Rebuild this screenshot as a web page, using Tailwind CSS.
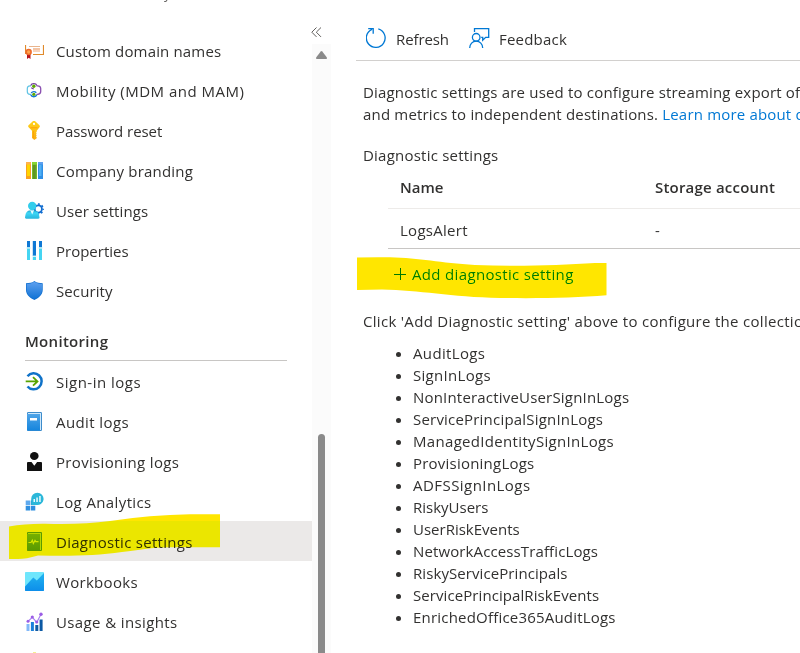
<!DOCTYPE html>
<html lang="en">
  <head>
    <meta charset="UTF-8" />
    <meta name="viewport" content="width=device-width, initial-scale=1.0" />
    <title>Diagnostic settings</title>
    <script src="https://cdn.jsdelivr.net/npm/@tailwindcss/browser@4"></script>
  </head>
  <body class="bg-white">
    <div class="relative flex w-[800px] h-[653px] overflow-hidden bg-white font-['Open_Sans','Noto_Sans',sans-serif] text-[15px] leading-[22px] text-[#323130]">
      <!-- Sidebar -->
      <nav class="w-[312px] shrink-0 whitespace-nowrap">
        <div class="h-[30px] overflow-hidden pl-[164px] text-[13px] text-[#605e5c]"><span class="block -mt-[17px]">y</span></div>
        <a class="flex h-10 items-center gap-[12px] pl-[25px]">
          <svg class="mt-px size-[19px] shrink-0" viewBox="0 0 19 19" fill="none">
            <path d="M.5 4v9M18.500 4v9.500H8" stroke="#e08a2b" stroke-width="1.200" />
            <path d="M4 5.500h11" stroke="#e9b48c" />
            <path d="M8 7h7v4H8z" fill="#f8d5bd" />
            <path d="M8 8h7" stroke="#f0b58e" />
            <path d="M2 13v5l1.700-1.300L5.500 18v-5z" fill="#b5121b" />
            <circle cx="3.700" cy="11" r="3.200" fill="#ee6a2c" />
            <circle cx="3.700" cy="11" r="1.700" fill="#ffa64d" />
          </svg>
          <span class="mt-[2px] tracking-[0.16px]">Custom domain names</span>
        </a>
        <a class="flex h-10 items-center gap-[12px] pl-[25px]">
          <svg class="mt-px size-[19px] shrink-0" viewBox="0 0 19 19" fill="none">
            <path d="M6 4.800H5C3 4.800 2.300 6 2.300 7.500v3C2.300 12 3 13.300 5 13.300h1" stroke="#5fc3e4" stroke-width="1.200" />
            <path d="M11.500 4.800h1c2.300 0 3.200 1.200 3.200 2.700v3c0 1.600-.9 2.800-3.200 2.800h-1" stroke="#8a4fb0" stroke-width="1.300" />
            <path d="M5.800 4.500a3.100 2.600 0 0 1 6 0M6.300 6.600q1 1.200 2.500 1.200" stroke="#713b9c" stroke-width="1.300" />
            <path d="M5.800 13.800a3.100 2.600 0 0 0 6 0M11.300 11.700q-1-1.100-2.500-1.100t-2.600 1.400" stroke="#1479d0" stroke-width="1.400" />
            <circle cx="8.800" cy="5.200" r="1.700" fill="#5ea800" />
            <circle cx="8.800" cy="13.300" r="1.600" fill="#5ea800" />
          </svg>
          <span class="mt-[2px] tracking-[0.5px]">Mobility (MDM and MAM)</span>
        </a>
        <a class="flex h-10 items-center gap-[12px] pl-[25px]">
          <svg class="mt-px size-[19px] shrink-0" viewBox="0 0 19 19">
            <defs><linearGradient id="key" x2="0" y2="1"><stop stop-color="#ffd31a" /><stop offset="1" stop-color="#f9ad10" /></linearGradient></defs>
            <path fill="url(#key)" fill-rule="evenodd" d="M7.800.2q1.200-.8 2.400 0l4 3.700q1.200 1.100.3 2.300L11.700 9.800v1.200l-.7.800.7.900-.7.900.7.900-.7.900.7.800v1L9.300 19 7 17V9.800L3.600 6.200q-1-1.200.2-2.300zM9 1.800A1.100 1.100 0 1 0 9 4a1.100 1.100 0 0 0 0-2.200z" />
            <path d="M5.500 6.200h7v1h-7zM8 10h.8v7H8z" fill="#ff9300" opacity=".7" />
          </svg>
          <span class="mt-[2px] -tracking-[0.05px]">Password reset</span>
        </a>
        <a class="flex h-10 items-center gap-[12px] pl-[25px]">
          <svg class="mt-px size-[19px] shrink-0" viewBox="0 0 19 19">
            <path d="M1 1h5v17H1z" fill="#faa21d" /><path d="M2 3h3v12H2z" fill="#ffd400" />
            <path d="M1 1h5v2.500H1z" fill="#ffb34d" />
            <path d="M7 1h5v17H7z" fill="#76b82a" /><path d="M8 4h2.700v14H8z" fill="#5e9624" />
            <path d="M7 1h5v2.500H7z" fill="#86d633" />
            <path d="M13 1h5v17h-5z" fill="#2f8fe6" /><path d="M14 4h2.500v11H14z" fill="#50b0f5" />
            <path d="M13 1h5v2.500h-5z" fill="#5ea0ef" />
          </svg>
          <span class="mt-[2px] tracking-[0.22px]">Company branding</span>
        </a>
        <a class="flex h-10 items-center gap-[12px] pl-[25px]">
          <svg class="mt-px size-[19px] shrink-0" viewBox="0 0 19 19">
            <defs><linearGradient id="usr" x2="0" y2="1"><stop stop-color="#22a5cb" /><stop offset=".3" stop-color="#3fd8f7" /><stop offset="1" stop-color="#29b5dc" /></linearGradient></defs>
            <circle cx="13.300" cy="8" r="3.600" fill="none" stroke="#0f6cd0" stroke-width="1.800" />
            <circle cx="13.300" cy="8" r="4.900" fill="none" stroke="#0f6cd0" stroke-width="1.500" stroke-dasharray="1.900 1.948" stroke-dashoffset=".95" />
            <path d="M0 16.500C.5 12 2 9.500 5 9.500h4.500c3 0 4.500 2.500 5 7 0 .8-.5 1.200-1.300 1.200h-12C.4 17.700 0 17.200 0 16.500z" fill="url(#usr)" />
            <path d="M5.400 9.500H9L7.200 13.500z" fill="#e9fbff" />
            <circle cx="7.200" cy="5" r="4.200" fill="#32cdec" />
          </svg>
          <span class="mt-[2px] tracking-[0.08px]">User settings</span>
        </a>
        <a class="flex h-10 items-center gap-[12px] pl-[25px]">
          <svg class="mt-px size-[19px] shrink-0" viewBox="0 0 19 19">
            <path d="M2 0h3v6H2zM7.800 0H11v15H7.800zM14 0h3v6h-3z" fill="#0f78d4" />
            <path d="M1.800 6h3.400v2H1.800zM7.600 14.500h3.600v1H7.600zM13.800 6h3.400v2h-3.400z" fill="#a5e3f5" />
            <path d="M2 8h3v11H2zM14 8h3v11h-3zM7.800 16H11v3H7.800z" fill="#45d5f2" />
          </svg>
          <span class="mt-[2px]">Properties</span>
        </a>
        <a class="flex h-10 items-center gap-[12px] pl-[25px]">
          <svg class="mt-px size-[19px] shrink-0" viewBox="0 0 19 19">
            <defs><linearGradient id="shd" x2="0" y2="1"><stop stop-color="#5ea0ef" /><stop offset="1" stop-color="#0f72d4" /></linearGradient></defs>
            <path d="M9.400 0C12 2 14.500 2 17.700 2.200V9c0 5-4.700 8.300-8.300 10C5.700 17.300 1 14 1 9V2.200C4.500 2 7 2 9.400 0z" fill="#0f6fd0" />
            <path d="M9.400.7C12 2.600 14.500 2.700 17 2.900V9c0 4.500-4.200 7.600-7.600 9.300C6 16.600 1.700 13.500 1.700 9V2.900C4.500 2.700 7 2.600 9.400.7z" fill="url(#shd)" />
          </svg>
          <span class="mt-[2px] tracking-[0.1px]">Security</span>
        </a>

        <h2 class="ml-[25px] mr-[25px] h-[51px] border-b border-[#c8c6c4] pt-[20px] font-semibold tracking-[0.3px]">Monitoring</h2>

        <a class="flex h-10 items-center gap-[12px] pl-[25px]">
          <svg class="mt-px size-[19px] shrink-0" viewBox="0 0 19 19" fill="none">
            <path d="M2.500 4.200A8 8 0 1 1 2.500 14.500" stroke="#0f72c8" stroke-width="2.500" />
            <path d="M.7 9.400h11.500M8 5.200l4.500 4.200L8 13.600" stroke="#57a300" stroke-width="1.800" />
          </svg>
          <span class="mt-[2px] tracking-[0.5px]">Sign-in logs</span>
        </a>
        <a class="flex h-10 items-center gap-[12px] pl-[25px]">
          <svg class="mt-px size-[19px] shrink-0" viewBox="0 0 19 19">
            <defs><linearGradient id="aud" x2="0" y2="1"><stop stop-color="#50a5e8" /><stop offset="1" stop-color="#1585dd" /></linearGradient></defs>
            <rect x="2" width="15" height="19" rx="1.200" fill="#3d8ccb" />
            <path d="M3 1h13v17H3z" fill="#cfe8fb" />
            <path d="M2 2h13v16.500H2z" fill="url(#aud)" />
            <path d="M5 6h7v2.500H5z" fill="#fff" />
          </svg>
          <span class="mt-[2px] tracking-[0.4px]">Audit logs</span>
        </a>
        <a class="flex h-10 items-center gap-[12px] pl-[25px]">
          <svg class="mt-px size-[19px] shrink-0" viewBox="0 0 19 19" fill="#111">
            <ellipse cx="9.300" cy="4" rx="4.300" ry="4" />
            <path d="M2 11q0-1 1-1h3.500l2.800 3.700L12.100 10H16q1 0 1 1v8H2z" />
          </svg>
          <span class="mt-[2px] tracking-[0.32px]">Provisioning logs</span>
        </a>
        <a class="flex h-10 items-center gap-[12px] pl-[25px]">
          <svg class="mt-px size-[19px] shrink-0" viewBox="0 0 19 19">
            <path d="M.7 8.500H5V13H.7z" fill="#5ea9ee" /><path d="M.7 13.700H5v4.800H.7zM5.700 13.700h4.600v4.800H5.700z" fill="#2f8fe0" /><path d="M5.700 8.500h4.600V13H5.700z" fill="#1c7dd2" />
            <path d="M12.300.7a6.200 6.200 0 1 1-1.500 12.200H6.200V7A6.200 6.200 0 0 1 12.300.7z" fill="#2bb7d9" />
            <path d="M8.500 7H10v3H8.500zM11.300 5.500h1.500V10h-1.500zM14.200 4h1.500v6h-1.500z" fill="#e9fbff" />
          </svg>
          <span class="mt-[2px] tracking-[0.38px]">Log Analytics</span>
        </a>
        <a class="flex h-10 items-center gap-[12px] bg-[#ebe9e8] pl-[25px]">
          <svg class="mt-px size-[19px] shrink-0" viewBox="0 0 19 19">
            <defs><linearGradient id="dia" x2="0" y2="1"><stop stop-color="#76b020" /><stop offset="1" stop-color="#5a9a10" /></linearGradient></defs>
            <rect x="2" width="15" height="19" rx="1" fill="#5a9a14" />
            <path d="M3 1h13v17H3z" fill="#b5d660" />
            <path d="M2 2h13v16.500H2z" fill="url(#dia)" />
            <path d="M3.500 10.500H6l1.300-2.300 1 3.300 1.700-3 .8 1.200h2.700" fill="none" stroke="#d5e85a" stroke-width="1.200" />
          </svg>
          <span class="mt-[2px] tracking-[0.28px]">Diagnostic settings</span>
        </a>
        <a class="flex h-10 items-center gap-[12px] pl-[25px]">
          <svg class="mt-px size-[19px] shrink-0" viewBox="0 0 19 19">
            <defs><linearGradient id="wbk" x2="0" y2="1"><stop stop-color="#22b5f0" /><stop offset="1" stop-color="#0d8eea" /></linearGradient></defs>
            <rect width="19" height="19" rx=".7" fill="#6fe6fc" />
            <path d="M0 14.500 8.300 5.500l3.500 3L19 1v17.300q0 .7-.7.700H.7Q0 19 0 18.300z" fill="url(#wbk)" />
          </svg>
          <span class="mt-[2px] tracking-[0.3px]">Workbooks</span>
        </a>
        <a class="flex h-10 items-center gap-[12px] pl-[25px]">
          <svg class="mt-px size-[19px] shrink-0" viewBox="0 0 19 19">
            <path d="M1.500 12h3v7h-3z" fill="#83b9f9" /><path d="M5.900 10h3v9h-3z" fill="#1b80da" /><path d="M10.300 13h3v6h-3z" fill="#125ba3" /><path d="M14.600 7.500h3V19h-3z" fill="#0c59a4" />
            <path d="m3 9.300 4.300-4 4.500 5L16 2.300" fill="none" stroke="#a67af4" stroke-width="1.100" />
            <g fill="#9b5de5"><circle cx="3" cy="9.300" r="1.500" /><circle cx="7.300" cy="5" r="1.600" /><circle cx="11.700" cy="10" r="1.600" /><circle cx="16" cy="2.300" r="1.700" /></g>
          </svg>
          <span class="mt-[2px] tracking-[0.38px]">Usage &amp; insights</span>
        </a>
        <div class="flex h-3 items-end pl-[33px]"><span class="h-px w-[3px] bg-[#f5ee90]"></span></div>
      </nav>

      <!-- Scrollbar -->
      <div class="flex w-[19px] shrink-0 flex-col">
        <svg class="-ml-px mt-[27px] h-[11px] w-[11px]" viewBox="0 0 11 11" fill="none" stroke="#605e5c"><path d="M5.500.5.800 5.200l4.700 4.700M10 .5 5.300 5.200 10 9.900" /></svg>
        <div class="mt-[6px] flex flex-1 flex-col items-center bg-[#fbfbfb] pt-[7px]">
          <svg class="h-2 w-[11px]" viewBox="0 0 11 8" fill="#8a8a8a"><path d="M4.700.6q.8-1 1.600 0l4.400 5.600q.8 1.800-1 1.800H1.300Q-.5 8 .3 6.200z" /></svg>
          <div class="mt-[375px] w-[7px] flex-1 rounded-t-full bg-[#8a8a8a]"></div>
        </div>
      </div>

      <!-- Content -->
      <main class="ml-[25px] w-[444px] shrink-0 overflow-hidden whitespace-nowrap">
        <div class="flex h-[61px] border-b border-[#d2d0ce] pl-[10px] pt-7">
          <svg class="h-5 w-5" viewBox="0 0 20 20" fill="none" stroke="#0078d4" stroke-width="1.300"><path d="M12.300.9A9.400 9.400 0 1 1 6 1.300M2.200.7h5v5" /></svg>
          <span class="ml-[10px] -tracking-[0.1px]">Refresh</span>
          <svg class="ml-[20px] h-5 w-[21px]" viewBox="0 0 21 20" fill="none" stroke="#0078d4" stroke-width="1.300"><path d="M5.500 4V.7h14.200v8.600h-3l-3 3V9.300h-1.500" /><circle cx="7.200" cy="9.300" r="3.800" /><path d="M.7 20c0-4 2.800-6.800 6.500-6.800s6.500 2.800 6.500 6.800" /></svg>
          <span class="ml-[9px] tracking-[0.22px]">Feedback</span>
        </div>
        <div class="pl-[7px]">
          <p class="mt-[20px] tracking-[0.18px]">Diagnostic settings are used to configure streaming export of<br />and metrics to independent destinations. <a class="text-[#0078d4]">Learn more about diagnostic settings</a></p>
          <p class="mt-[19px] tracking-[0.22px]">Diagnostic settings</p>
          <table class="ml-[25px] w-[500px] table-fixed text-left">
            <thead>
              <tr class="h-[42px] border-b border-[#edebe9]">
                <th class="w-[255px] pl-3 font-semibold">Name</th>
                <th class="pl-3 pt-px font-semibold tracking-[0.2px]">Storage account</th>
              </tr>
            </thead>
            <tbody>
              <tr class="h-[40px] border-b border-[#c8c6c4]">
                <td class="pl-3 pt-1 tracking-[0.28px]">LogsAlert</td>
                <td class="pl-3 pt-1">-</td>
              </tr>
            </tbody>
          </table>
          <a class="mt-[14px] flex items-center gap-[6px] pl-[31px] text-[#0078d4]">
            <svg class="size-3" viewBox="0 0 12 12" fill="none" stroke="#0078d4"><path d="M6.500 0v12M0 6.500h12" /></svg>
            <span class="tracking-[0.34px]">Add diagnostic setting</span>
          </a>
          <p class="mt-[25px] tracking-[0.3px]">Click 'Add Diagnostic setting' above to configure the collection of</p>
          <ul class="mt-[10px] list-disc pl-[50px]">
            <li class="tracking-[0.35px]">AuditLogs</li>
            <li class="tracking-[0.3px]">SignInLogs</li>
            <li class="tracking-[0.19px]">NonInteractiveUserSignInLogs</li>
            <li class="tracking-[0.2px]">ServicePrincipalSignInLogs</li>
            <li class="tracking-[0.32px]">ManagedIdentitySignInLogs</li>
            <li class="tracking-[0.22px]">ProvisioningLogs</li>
            <li class="tracking-[0.45px]">ADFSSignInLogs</li>
            <li>RiskyUsers</li>
            <li>UserRiskEvents</li>
            <li class="tracking-[0.12px]">NetworkAccessTrafficLogs</li>
            <li class="tracking-[0.08px]">RiskyServicePrincipals</li>
            <li class="tracking-[0.08px]">ServicePrincipalRiskEvents</li>
            <li class="tracking-[0.2px]">EnrichedOffice365AuditLogs</li>
          </ul>
        </div>
      </main>

      <!-- Marker strokes -->
      <svg class="pointer-events-none absolute inset-0 mix-blend-darken" width="800" height="653" viewBox="0 0 800 653" fill="#ffe600">
        <path d="M9 526.500Q25 523.500 45 523.700Q80 525 110 521Q150 515 190 514.300H220V547.300H170C150 547.500 140 550 122 552C95 556 70 556 38 555.500Q26 559 18 559H9z" />
        <path d="M357 257.500Q375 257 390 257.300C420 258 440 263 475 265C520 267 560 265 595 263H606.500V295.300C575 298 540 298.500 500 298C450 297 420 290 382 289.500L357 290z" />
      </svg>
    </div>
  </body>
</html>
